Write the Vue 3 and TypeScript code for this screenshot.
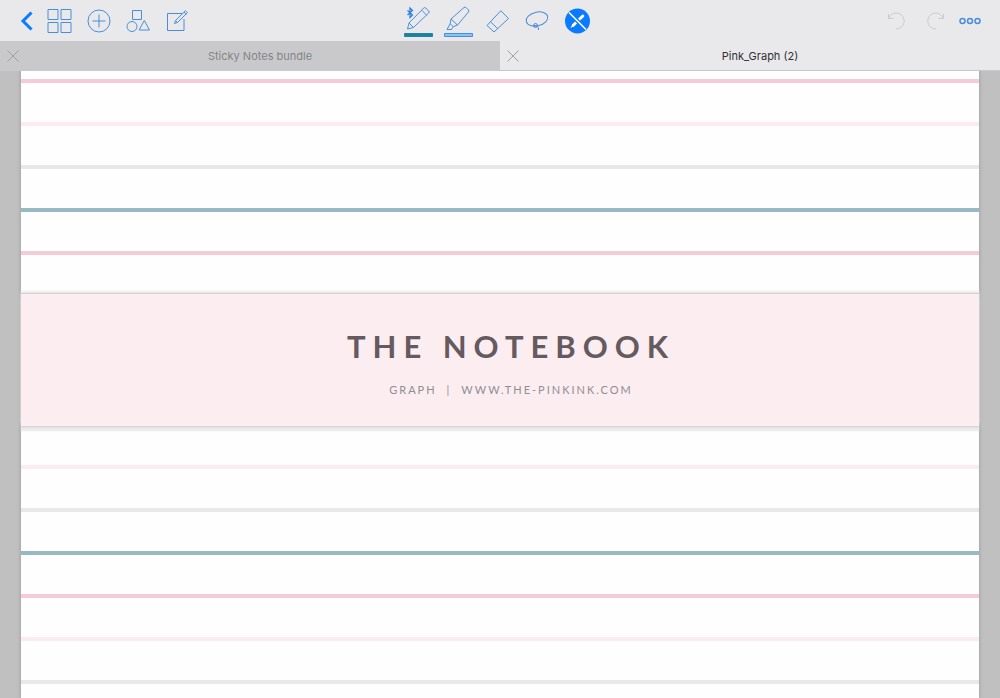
<script setup lang="ts">
import { ref } from 'vue'

type Rule = 'rose' | 'blush' | 'grey' | 'teal'

const tabs = ['Sticky Notes bundle', 'Pink_Graph (2)']
const active = ref(1)
const upperRules: Rule[] = ['rose', 'blush', 'grey', 'teal', 'rose']
const lowerRules: Rule[] = ['blush', 'grey', 'teal', 'rose', 'blush', 'grey']
</script>

<template>
  <div class="app">
    <header class="toolbar">
      <div class="group">
        <button class="tool back" aria-label="Back">
          <svg width="14" height="20" viewBox="0 0 14 20"><path d="M12.500 1.500 4 10l8.500 8.500" class="thick" /></svg>
        </button>
        <button class="tool left" aria-label="Thumbnails">
          <svg width="26" height="26" viewBox="0 0 26 26">
            <path d="M1 1.500h10v10H1zM14 1.500h10v10h-10zM1 14.500h10v10H1zM14 14.500h10v10h-10z" />
          </svg>
        </button>
        <button class="tool left" aria-label="Add page">
          <svg width="26" height="26" viewBox="0 0 26 26"><circle cx="13" cy="13" r="11" /><path d="M13 6.500v13M6.500 13h13" /></svg>
        </button>
        <button class="tool left" aria-label="Shapes">
          <svg width="26" height="26" viewBox="0 0 26 26">
            <path d="M7.500 2.500h9v9h-9zM19.300 12.500 24.500 22h-10.400z" /><circle cx="7" cy="18.500" r="5" />
          </svg>
        </button>
        <button class="tool left" aria-label="Edit">
          <svg width="26" height="26" viewBox="0 0 26 26">
            <path d="M18 5.500H3.500v17h16.500V11M10.500 15.500l1-3L21.500 2.700l2 2L13.500 14.500zM20 4l2.200 2.200M11.500 12.500l2 2" />
          </svg>
        </button>
      </div>

      <div class="group">
        <button class="tool" aria-label="Pen">
          <svg width="32" height="41" viewBox="0 0 32 41">
            <path d="M5.500 29l1.500-6L21.700 8q1-1 2 0l3 3q1 1 0 2L11.500 27.500zM19.700 10.200l5 5M7 23l4.500 4.500" />
            <path d="M5.500 10.500l5 4.500-2.500 2.500V8l2.500 2.500-5 4.500" class="bluetooth" />
            <path d="M2.500 33.500h28v3h-28z" class="pen-ink" />
          </svg>
        </button>
        <button class="tool" aria-label="Highlighter">
          <svg width="32" height="41" viewBox="0 0 32 41">
            <path d="M5 29.500l3.200-5.800 3 3-1.700 2.800zM8.200 23.700l.8-4.700L22 7.500q1-.8 2 0l2.500 2.500q.8 1 0 2L15.500 25l-4.300 1.700M9 19l6.500 6" />
            <path d="M2.500 33.500h28v3h-28z" class="marker-ink" />
          </svg>
        </button>
        <button class="tool" aria-label="Eraser">
          <svg width="26" height="26" viewBox="0 0 26 26">
            <path d="M2 17.500 15.800 2.700 23.500 10.500 9 24zM5.500 13.700l7.200 7" />
          </svg>
        </button>
        <button class="tool" aria-label="Lasso">
          <svg width="26" height="26" viewBox="0 0 26 26">
            <ellipse cx="12" cy="11" rx="11" ry="6.800" transform="rotate(-14 12 11)" />
            <circle cx="10.500" cy="17.500" r="2" /><path d="M9 17.500q5-.5 4.500 4.500" />
          </svg>
        </button>
        <button class="tool" aria-label="Read only mode">
          <svg width="26" height="26" viewBox="0 0 26 26">
            <circle cx="12.500" cy="13" r="12.500" class="disc" />
            <path d="M17.800 8 8.500 17" class="pencil" /><path d="M7.500 16 5.500 20l4-2z" class="tip" />
            <path d="M4 4.500l17 17" class="slash-edge" /><path d="M4 4.500l17 17" class="slash" />
          </svg>
        </button>
      </div>

      <div class="group end">
        <button class="tool faded" aria-label="Undo" disabled>
          <svg width="20" height="20" viewBox="0 0 20 20"><path d="M2.500 3v4.500h5M2.700 7.300A8 8 0 1 1 10 18" /></svg>
        </button>
        <button class="tool faded" aria-label="Redo" disabled>
          <svg width="20" height="20" viewBox="0 0 20 20"><path d="M17.500 3v4.500h-5M17.300 7.300A8 8 0 1 0 10 18" /></svg>
        </button>
        <button class="tool more" aria-label="More">
          <svg width="22" height="8" viewBox="0 0 22 8"><circle cx="3.500" cy="4" r="2.500" /><circle cx="11" cy="4" r="2.500" /><circle cx="18.500" cy="4" r="2.500" /></svg>
        </button>
      </div>
    </header>

    <nav class="tabs" aria-label="Open documents">
      <div v-for="(tab, i) in tabs" :key="tab" class="tab" :class="{ active: i === active }">
        <button class="close" :aria-label="`Close ${tab}`">
          <svg width="12" height="12" viewBox="0 0 12 12"><path d="M.5.5l11 11M11.500.5l-11 11" /></svg>
        </button>
        <button class="title" @click="active = i">{{ tab }}</button>
      </div>
    </nav>

    <main class="desk">
      <article class="paper">
        <div class="rules upper"><span v-for="(r, i) in upperRules" :key="i" class="rule" :class="r"></span></div>
        <section class="label">
          <h1>THE NOTEBOOK</h1>
          <p><span>GRAPH</span><span>|</span><span>WWW.THE-PINKINK.COM</span></p>
        </section>
        <div class="rules lower"><span v-for="(r, i) in lowerRules" :key="i" class="rule" :class="r"></span></div>
      </article>
    </main>
  </div>
</template>

<style>
body {
  margin: 0;
}
</style>

<style scoped>
.app {
  display: flex;
  flex-direction: column;
  height: 100vh;
  overflow: hidden;
  background: #c0c0c0;
  font-family: Inter, "Liberation Sans", sans-serif;
}
button {
  border: 0;
  margin: 0;
  padding: 0;
  background: none;
  font: inherit;
  color: inherit;
}
svg {
  display: block;
  fill: none;
  stroke: #4a8edb;
  stroke-width: 1;
}
.toolbar {
  display: grid;
  grid-template-columns: 1fr auto 1fr;
  flex: none;
  height: 41px;
  padding: 0 16px 0 12px;
  background: #e9e9eb;
}
.group {
  display: flex;
}
.end {
  justify-content: flex-end;
}
.tool {
  display: flex;
  align-items: center;
  justify-content: center;
  width: 40px;
  height: 41px;
}
.back,
.more {
  width: 28px;
}
.left {
  width: 39px;
}
.thick {
  stroke: #0a7aff;
  stroke-width: 3;
}
.more svg {
  stroke-width: 1.5;
}
.faded svg {
  stroke: #cbcbce;
}
.bluetooth {
  stroke: #2f80dd;
  stroke-width: 1.3;
}
.pen-ink {
  fill: #16839f;
  stroke: #2c7fa5;
}
.marker-ink {
  fill: #85c4fb;
}
.disc {
  fill: #0a7aff;
  stroke: none;
}
.pencil {
  stroke: #fff;
  stroke-width: 3;
  stroke-linecap: round;
}
.tip {
  fill: #fff;
  stroke: none;
}
.slash-edge {
  stroke: #0a7aff;
  stroke-width: 4;
}
.slash {
  stroke: #fff;
  stroke-width: 1.6;
}
.tabs {
  display: flex;
  flex: none;
  height: 29px;
  border-bottom: 1px solid #c9c9cb;
}
.tab {
  display: flex;
  flex: 1;
  padding-right: 6px;
  background: #c9c9cb;
  color: #848486;
  font-size: 11px;
}
.tab.active {
  background: #e9e9eb;
  color: #303032;
}
.close {
  display: flex;
  align-items: center;
  justify-content: center;
  width: 26px;
}
.close svg {
  stroke: #a0a0a2;
}
.title {
  flex: 1;
  text-align: center;
}
.desk {
  flex: 1;
  min-height: 0;
  padding: 0 21px;
  overflow: hidden;
}
.paper {
  min-height: 100%;
  background: #fefefe;
  box-shadow: 0 0 3px 1px #a6a6a8;
}
.rules {
  display: flex;
  flex-direction: column;
  gap: 39px;
}
.upper {
  padding: 8px 0 39px;
}
.lower {
  padding: 39px 0 14px;
}
.rule {
  height: 4px;
}
.rose {
  background: #f5ccd6;
}
.blush {
  background: #fcebef;
}
.grey {
  background: #e8e8e9;
}
.teal {
  background: #98b9c2;
}
.label {
  display: flex;
  flex-direction: column;
  align-items: center;
  gap: 14px;
  box-sizing: border-box;
  min-height: 132px;
  padding: 30px 0 24px 22px;
  background: #fcedf0;
  box-shadow: 0 -1px 1px #d5cfd2, 0 -3px 2px #ececed, 0 1px 2px #cfcccf, 0 5px 1px #ebebed;
  font-family: Lato, "Open Sans", sans-serif;
}
h1 {
  margin: 0;
  color: #655a60;
  font-size: 31px;
  font-weight: 700;
  line-height: 44px;
  letter-spacing: 7px;
}
p {
  display: flex;
  gap: 10px;
  margin: 0;
  color: #8f8e95;
  font-size: 11px;
  line-height: 16px;
  letter-spacing: 2px;
}
</style>
